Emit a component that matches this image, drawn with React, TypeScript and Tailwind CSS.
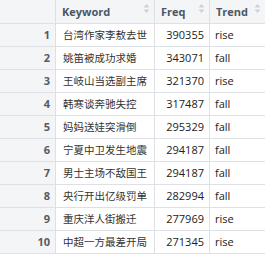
import React from 'react';

const ROWS: [string, number, string][] = [
  ['台湾作家李敖去世', 390355, 'rise'],
  ['姚笛被成功求婚', 343071, 'fall'],
  ['王岐山当选副主席', 321370, 'rise'],
  ['韩寒谈奔驰失控', 317487, 'fall'],
  ['妈妈送娃突滑倒', 295329, 'fall'],
  ['宁夏中卫发生地震', 294187, 'fall'],
  ['男士主场不敌国王', 294187, 'fall'],
  ['央行开出亿级罚单', 282994, 'fall'],
  ['重庆洋人街搬迁', 277969, 'rise'],
  ['中超一方最差开局', 271345, 'rise'],
];

const SortIcon = () => (
  <svg width="7" height="9" viewBox="0 0 7 9" className="shrink-0">
    <path d="M3.5 0 L6.5 3.5 L0.5 3.5 Z" fill="#cdd1d6" />
    <path d="M3.5 9 L6.5 5.5 L0.5 5.5 Z" fill="#cdd1d6" />
  </svg>
);

const App: React.FC = () => {
  return (
    <div
      className="w-[265px] h-[254px] bg-white overflow-hidden text-[11px] text-[#222]"
      style={{ fontFamily: '"Open Sans", "Noto Sans CJK SC", sans-serif' }}
    >
      {/* header */}
      <div className="flex h-[24px] bg-[#f4f5f7] border-b border-[#dde0e4]">
        <div className="w-[56px] border-r border-[#dde0e4]" />
        <div className="w-[99px] border-r border-[#dde0e4] flex items-start justify-between pl-[6px] pr-[4px]">
          <span className="font-bold text-[#4b5766] leading-[23px]">Keyword</span>
          <span className="mt-[4px]"><SortIcon /></span>
        </div>
        <div className="w-[55px] border-r border-[#dde0e4] flex items-start justify-between pl-[6px] pr-[4px]">
          <span className="font-bold text-[#4b5766] leading-[23px]">Freq</span>
          <span className="mt-[4px]"><SortIcon /></span>
        </div>
        <div className="flex-1 flex items-start justify-between pl-[6px] pr-[4px]">
          <span className="font-bold text-[#4b5766] leading-[23px]">Trend</span>
          <span className="mt-[4px]"><SortIcon /></span>
        </div>
      </div>
      {ROWS.map(([kw, freq, trend], i) => (
        <div key={i} className="flex h-[23px] border-b border-[#dde0e4]">
          <div className="w-[56px] bg-[#f4f5f7] border-r border-[#dde0e4] text-right pr-[5px] font-bold text-[#555b63] leading-[22px]">
            {i + 1}
          </div>
          <div className="w-[99px] border-r border-[#dde0e4] pl-[7px] text-[10.5px] text-[#333] leading-[22px] whitespace-nowrap overflow-hidden">
            {kw}
          </div>
          <div className="w-[55px] border-r border-[#dde0e4] text-right pr-[5px] leading-[22px]">
            {freq}
          </div>
          <div className="flex-1 pl-[5px] leading-[22px]">{trend}</div>
        </div>
      ))}
    </div>
  );
};

export default App;
